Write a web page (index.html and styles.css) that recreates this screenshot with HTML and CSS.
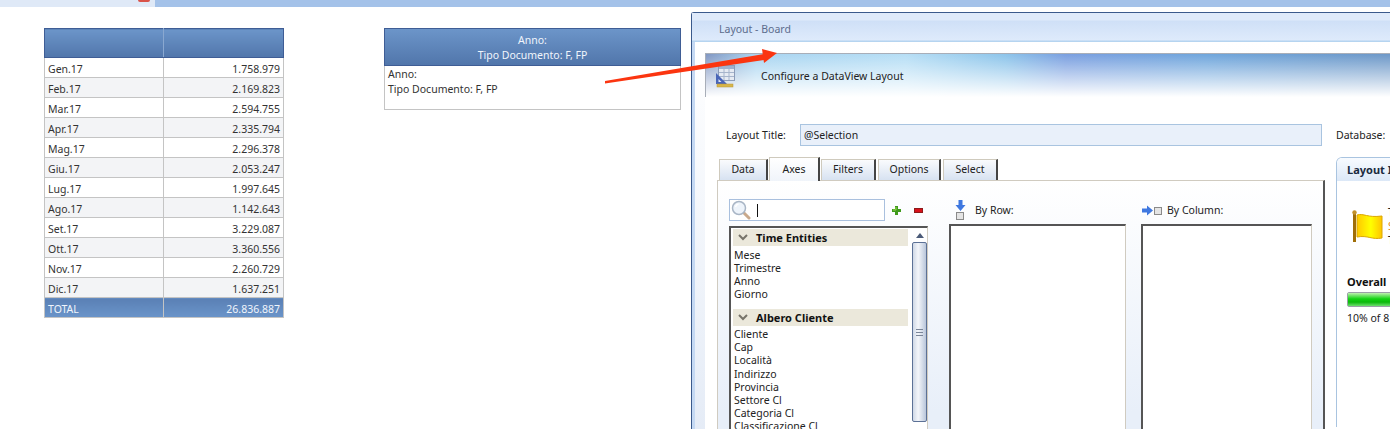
FILE: index.html
```html
<!DOCTYPE html>
<html lang="en">
<head>
    <meta charset="UTF-8">
    <title>Layout - Board</title>
    <link rel="stylesheet" href="styles.css">
</head>
<body>
    <div class="canvas">
        <!-- Top strip of the host app -->
        <div class="topbar">
            <div class="topbar-left"><span class="topbar-close"></span></div>
            <div class="topbar-right"></div>
        </div>

        <!-- Months table -->
        <table class="pivot">
            <thead>
                <tr><th></th><th></th></tr>
            </thead>
            <tbody>
                <tr><td>Gen.17</td><td class="num">1.758.979</td></tr>
                <tr><td>Feb.17</td><td class="num">2.169.823</td></tr>
                <tr><td>Mar.17</td><td class="num">2.594.755</td></tr>
                <tr><td>Apr.17</td><td class="num">2.335.794</td></tr>
                <tr><td>Mag.17</td><td class="num">2.296.378</td></tr>
                <tr><td>Giu.17</td><td class="num">2.053.247</td></tr>
                <tr><td>Lug.17</td><td class="num">1.997.645</td></tr>
                <tr><td>Ago.17</td><td class="num">1.142.643</td></tr>
                <tr><td>Set.17</td><td class="num">3.229.087</td></tr>
                <tr><td>Ott.17</td><td class="num">3.360.556</td></tr>
                <tr><td>Nov.17</td><td class="num">2.260.729</td></tr>
                <tr><td>Dic.17</td><td class="num">1.637.251</td></tr>
            </tbody>
            <tfoot>
                <tr><td>TOTAL</td><td class="num">26.836.887</td></tr>
            </tfoot>
        </table>

        <!-- Selection box -->
        <div class="selection">
            <div class="selection-head">Anno:<br>Tipo Documento: F, FP</div>
            <div class="selection-body">Anno:<br>Tipo Documento: F, FP</div>
        </div>

        <!-- Layout window -->
        <div class="dialog">
            <div class="dialog-title">Layout - Board</div>
            <div class="dialog-body">
                <div class="dialog-inner">
                    <div class="banner">
                        <svg class="banner-icon" width="20" height="24" viewBox="0 0 20 24">
                            <rect x="2.5" y="1.5" width="16" height="15" fill="#e6ebf3" stroke="#8c9cb8"/>
                            <rect x="3" y="2" width="15" height="3" fill="#9fb2d0"/>
                            <path d="M3 8.5h15M3 12.5h15M8 5v11M13 5v11" stroke="#a7b5cc" fill="none"/>
                            <path d="M0 9v11h11z" fill="#4a66b8"/>
                            <path d="M2.500 15v3h3z" fill="#dfe6f5"/>
                            <rect x="1" y="20" width="16" height="3" fill="#d8b64a" stroke="#b6953a" stroke-width=".5"/>
                        </svg>
                        <span>Configure a DataView Layout</span>
                    </div>

                    <div class="title-row">
                        <label class="title-label">Layout Title:</label>
                        <div class="title-input">@Selection</div>
                        <label class="db-label">Database:</label>
                    </div>

                    <div class="columns">
                        <div class="editor">
                            <div class="tabs">
                                <div class="tab tab-data">Data</div>
                                <div class="tab tab-axes active">Axes</div>
                                <div class="tab tab-filters">Filters</div>
                                <div class="tab tab-options">Options</div>
                                <div class="tab tab-select">Select</div>
                            </div>
                            <div class="tab-panel">
                                <div class="entities">
                                    <div class="search-row">
                                        <div class="search">
                                            <svg width="20" height="20" viewBox="0 0 20 20">
                                                <path d="M12 12l6 6" stroke="#c9a98c" stroke-width="3" stroke-linecap="round"/>
                                                <circle cx="8" cy="8" r="6.500" fill="#eef4fb" stroke="#a9b6c6" stroke-width="1.500"/>
                                                <path d="M4.500 7a4 4 0 0 1 3-3" stroke="#fff" stroke-width="1.500" fill="none"/>
                                            </svg>
                                            <span class="caret"></span>
                                        </div>
                                        <svg class="plus" width="11" height="11" viewBox="0 0 11 11">
                                            <path d="M5.500 1v9M1 5.500h9" stroke="#3f9a1c" stroke-width="3"/>
                                            <path d="M5 2v3H2" stroke="#9ad84e" fill="none"/>
                                        </svg>
                                        <span class="minus"></span>
                                    </div>
                                    <div class="listbox">
                                        <div class="list-content">
                                            <div class="group">
                                                <svg width="10" height="7" viewBox="0 0 10 7"><path d="M1 1l4 4 4-4" stroke="#77746a" stroke-width="2" fill="none"/></svg>
                                                Time Entities
                                            </div>
                                            <ul class="items">
                                                <li>Mese</li>
                                                <li>Trimestre</li>
                                                <li>Anno</li>
                                                <li>Giorno</li>
                                            </ul>
                                            <div class="group">
                                                <svg width="10" height="7" viewBox="0 0 10 7"><path d="M1 1l4 4 4-4" stroke="#77746a" stroke-width="2" fill="none"/></svg>
                                                Albero Cliente
                                            </div>
                                            <ul class="items">
                                                <li>Cliente</li>
                                                <li>Cap</li>
                                                <li>Località</li>
                                                <li>Indirizzo</li>
                                                <li>Provincia</li>
                                                <li>Settore Cl</li>
                                                <li>Categoria Cl</li>
                                                <li>Classificazione Cl</li>
                                            </ul>
                                        </div>
                                        <div class="scrollbar">
                                            <span class="scroll-up"></span>
                                            <div class="scroll-thumb"><span class="grip"></span></div>
                                        </div>
                                    </div>
                                </div>

                                <div class="axis axis-row">
                                    <div class="axis-head">
                                        <svg width="11" height="21" viewBox="0 0 11 21">
                                            <path d="M3.500 0h4v5h3l-5 6-5-6h3z" fill="#3f78e0"/>
                                            <rect x="1.500" y="12.500" width="7" height="7" fill="#e4e4e4" stroke="#8a8a8a"/>
                                        </svg>
                                        <span>By Row:</span>
                                    </div>
                                    <div class="axis-list"></div>
                                </div>

                                <div class="axis axis-col">
                                    <div class="axis-head">
                                        <svg width="21" height="11" viewBox="0 0 21 11">
                                            <path d="M0 3.500h5v-3l6 5-6 5v-3h-5z" fill="#3f78e0"/>
                                            <rect x="12.500" y="2.500" width="7" height="7" fill="#e4e4e4" stroke="#8a8a8a"/>
                                        </svg>
                                        <span>By Column:</span>
                                    </div>
                                    <div class="axis-list"></div>
                                </div>
                            </div>
                        </div>

                        <div class="info">
                            <div class="info-head">Layout Info</div>
                            <div class="info-body">
                                <div class="flag-row">
                                    <svg width="31" height="32" viewBox="0 0 31 32">
                                        <defs>
                                            <linearGradient id="flagFill">
                                                <stop offset="0" stop-color="#ffc800"/>
                                                <stop offset=".55" stop-color="#ffff00"/>
                                                <stop offset="1" stop-color="#ffc400"/>
                                            </linearGradient>
                                        </defs>
                                        <rect x="1" y="2" width="3" height="30" fill="#a06e08"/>
                                        <circle cx="2.500" cy="2.500" r="2.200" fill="#c2912a"/>
                                        <path d="M5 5c7-2 10 3 25 1v22c-10 2-14-3-25-1z" fill="url(#flagFill)" stroke="#dca800"/>
                                    </svg>
                                    <div class="flag-text">
                                        <span>Total</span>
                                        <span class="flag-warn">Selected</span>
                                        <span>Total</span>
                                    </div>
                                </div>
                                <div class="overall">Overall</div>
                                <div class="progress"><div class="progress-fill"></div></div>
                                <div class="progress-text">10% of 8</div>
                            </div>
                        </div>
                    </div>
                </div>
            </div>
        </div>

        <!-- Red annotation arrow -->
        <svg class="arrow" width="190" height="50" viewBox="0 0 190 50">
            <path d="M1 32L160 5V11L1 34.500z" fill="#fb3510"/>
            <path d="M158 0L173 4L160 14z" fill="#fb3510"/>
        </svg>
    </div>
</body>
</html>
```

FILE: styles.css
```css
* {
    margin: 0;
    padding: 0;
    box-sizing: border-box;
}

body {
    background: #fff;
    overflow: hidden;
    font-family: "Noto Sans", "Open Sans", sans-serif;
    font-size: 10.5px;
    color: #222;
}

.canvas {
    position: relative;
    width: 1390px;
    height: 429px;
    overflow: hidden;
}

.topbar {
    display: flex;
    height: 7px;
}

.topbar-left {
    width: 155px;
    background: #dfe9f7;
    position: relative;
}

.topbar-close {
    position: absolute;
    left: 138px;
    top: 0;
    width: 12px;
    height: 2px;
    background: #d9534a;
    border-radius: 0 0 3px 3px;
}

.topbar-right {
    flex: 1;
    background: #a4c2e9;
}

/* Months table */
.pivot {
    position: absolute;
    left: 44px;
    top: 28px;
    width: 240px;
    border-collapse: collapse;
    table-layout: fixed;
}

.pivot th {
    height: 29px;
    background: linear-gradient(#6c95c9, #5176ab);
    border: 1px solid #3f5d95;
    border-right-color: #8aa8d0;
}

.pivot th:last-child {
    border-right-color: #3f5d95;
}

.pivot th:first-child {
    width: 119px;
}

.pivot td {
    height: 20px;
    padding: 2px 3px 0;
    border: 1px solid #c4c4c4;
    color: #333;
    line-height: 14px;
}

.pivot tbody tr:nth-child(even) td {
    background: #f3f4f6;
}

.pivot .num {
    text-align: right;
}

.pivot tfoot td {
    background: linear-gradient(#5a80b5, #6a94c9);
    color: #f0f5fc;
}

/* Selection box */
.selection {
    position: absolute;
    left: 384px;
    top: 28px;
    width: 297px;
    height: 82px;
    border: 1px solid #c4c4c4;
}

.selection-head {
    margin: -1px -1px 0;
    height: 38px;
    padding-top: 4px;
    background: linear-gradient(#6c95c9, #5176ab);
    border: 1px solid #3f5d95;
    color: #f0f5fc;
    text-align: center;
    line-height: 15px;
}

.selection-body {
    padding: 1px 3px;
    line-height: 15px;
    color: #333;
}

/* Layout window */
.dialog {
    position: absolute;
    left: 691px;
    top: 12px;
    width: 900px;
    height: 430px;
    background: #fff;
    border-top: 1px solid #3b5a8c;
    border-left: 1px solid #3b5a8c;
    border-top-left-radius: 3px;
}

.dialog-title {
    height: 29px;
    padding: 9px 0 0 27px;
    background: linear-gradient(#dfeafa 0, #dfeafa 7px, #cfe0f7 8px, #deeafb 27px, #b5d4f0 28px);
    color: #5c6c8c;
    line-height: 15px;
}

.dialog-body {
    height: 400px;
    padding: 11px 0 0 13px;
    background:
        linear-gradient(#c5d9f3, #c5d9f3) left / 3px 100% no-repeat,
        linear-gradient(#fff, #e4ebf6);
}

.dialog-inner {
    height: 100%;
    background: #fff;
}

.banner {
    display: flex;
    align-items: center;
    height: 44px;
    padding-left: 10px;
    border-top: 1px solid #a8aeb8;
    border-left: 1px solid #a8aeb8;
    background:
        linear-gradient(rgba(255, 255, 255, 0), #fff),
        linear-gradient(90deg, #8096c2 0, #a9d5f1 50px, #b6def5 200px, #8cc4ea 300px, #7a9fe0 360px, #6fa6dc 500px, #6d98c8 680px);
}

.banner-icon {
    margin-right: 25px;
    margin-top: 1px;
}

.title-row {
    display: flex;
    align-items: center;
    height: 22px;
    margin-top: 27px;
    padding-left: 21px;
}

.title-label {
    width: 74px;
}

.title-input {
    width: 522px;
    height: 22px;
    padding-left: 3px;
    line-height: 20px;
    background: #e9f0fa;
    border: 1px solid #a9c4e0;
}

.db-label {
    margin-left: 14px;
}

.columns {
    display: flex;
    margin-top: 11px;
    padding-left: 12px;
    height: 270px;
}

.editor {
    flex: none;
    width: 608px;
    display: flex;
    flex-direction: column;
}

/* Tabs */
.tabs {
    display: flex;
    align-items: flex-end;
    flex: none;
    height: 23px;
    padding-left: 2px;
    gap: 1px;
    position: relative;
    z-index: 1;
}

.tab {
    height: 21px;
    line-height: 19px;
    text-align: center;
    background: linear-gradient(#fafbfd, #d7e2f1);
    border: 1px solid #cfcabd;
    border-right: 2px solid #444;
    border-bottom: 0;
}

.tab-data { width: 49px; }
.tab-axes { width: 51px; }
.tab-filters { width: 55px; margin-right: 1px; }
.tab-options { width: 63px; margin-right: 1px; }
.tab-select { width: 55px; }

.tab.active {
    height: 24px;
    margin-bottom: -1px;
    line-height: 23px;
    background: linear-gradient(#fff, #f0f4fa);
}

.tab-panel {
    flex: 1;
    display: flex;
    padding: 18px 0 0 11px;
    background: linear-gradient(#fff, #e8eff9 230px);
    border-top: 1px solid #d0cbc0;
    border-left: 1px solid #d0cbc0;
    border-right: 2px solid #555;
}

.entities {
    flex: none;
    width: 199px;
    margin-right: 21px;
}

.search-row {
    display: flex;
    align-items: center;
    height: 22px;
    margin-bottom: 5px;
}

.search {
    display: flex;
    align-items: center;
    width: 156px;
    height: 22px;
    padding-left: 1px;
    background: #fff;
    border: 1px solid #a9c0de;
}

.caret {
    width: 1px;
    height: 13px;
    margin-left: 6px;
    background: #111;
}

.plus {
    margin-left: 6px;
}

.minus {
    width: 9px;
    height: 5px;
    margin-left: 12px;
    background: #d8101a;
    border: 1px solid #8d1a1a;
}

.listbox {
    display: flex;
    height: 225px;
    background: #fff;
    border: 1px solid #d0cbc0;
    border-top: 2px solid #555;
    border-left: 2px solid #555;
}

.list-content {
    width: 180px;
    padding: 1px 0 0 2px;
}

.group {
    display: flex;
    align-items: center;
    gap: 8px;
    height: 17px;
    padding-left: 5px;
    width: 175px;
    background: #ebe8db;
    color: #111;
    font-weight: 700;
    font-size: 11px;
}

.items {
    list-style: none;
    padding: 3px 0 8px 1px;
    line-height: 13px;
}

.items:last-child {
    padding-top: 2px;
    line-height: 13.200px;
}

.scrollbar {
    width: 15px;
    margin-left: 1px;
    position: relative;
}

.scroll-up {
    display: block;
    width: 0;
    margin: 5px auto 4px;
    border: 4px solid transparent;
    border-top: 0;
    border-bottom: 5px solid #4a5a78;
}

.scroll-thumb {
    display: flex;
    align-items: center;
    justify-content: center;
    height: 180px;
    margin-top: 2px;
    background: linear-gradient(90deg, #cfd8e6, #f4f6fa 40%, #b9c6da);
    border: 1px solid #5c7196;
    border-radius: 2px;
}

.grip {
    width: 7px;
    height: 7px;
    border-top: 1px solid #7a8598;
    border-bottom: 1px solid #7a8598;
    background: linear-gradient(#7a8598, #7a8598) center / 100% 1px no-repeat;
}

/* Axis lists */
.axis-row {
    flex: none;
    width: 177px;
    margin-right: 15px;
}

.axis-col {
    flex: none;
    width: 171px;
}

.axis-head {
    display: flex;
    align-items: center;
    height: 26px;
    margin-top: -2px;
    margin-bottom: 1px;
    gap: 9px;
    padding-left: 6px;
}

.axis-col .axis-head {
    padding-left: 1px;
    gap: 4px;
}

.axis-list {
    height: 225px;
    background: #fff;
    border: 1px solid #d0cbc0;
    border-top: 2px solid #555;
    border-left: 2px solid #555;
}

/* Right info panel */
.info {
    flex: none;
    width: 200px;
    margin-left: 11px;
    border: 1px solid #a9c4e0;
    border-bottom: 0;
    border-top-left-radius: 6px;
    overflow: hidden;
}

.info-head {
    height: 23px;
    padding-left: 10px;
    line-height: 23px;
    background: linear-gradient(#f8fbff, #dce8f7);
    font-weight: 700;
    font-size: 11px;
    color: #1a2a40;
}

.info-body {
    padding: 29px 0 0 10px;
}

.flag-row {
    display: flex;
    height: 32px;
    padding-left: 5px;
    gap: 5px;
}

.flag-text {
    display: flex;
    flex-direction: column;
    gap: 2px;
    line-height: 12px;
    margin-top: -4px;
}

.flag-warn {
    color: #e08a20;
}

.overall {
    margin-top: 32px;
    font-weight: 700;
    font-size: 11px;
    color: #111;
}

.progress {
    width: 150px;
    height: 15px;
    margin-top: 3px;
    background: #e6e6e6;
    border: 1px solid #9aa0a6;
    border-radius: 2px;
}

.progress-fill {
    width: 100%;
    height: 100%;
    background: linear-gradient(#bff0b0, #12d412 45%, #0bb80b 70%, #6fe06f);
}

.progress-text {
    margin-top: 4px;
}

.arrow {
    position: absolute;
    left: 604px;
    top: 49px;
}
```
